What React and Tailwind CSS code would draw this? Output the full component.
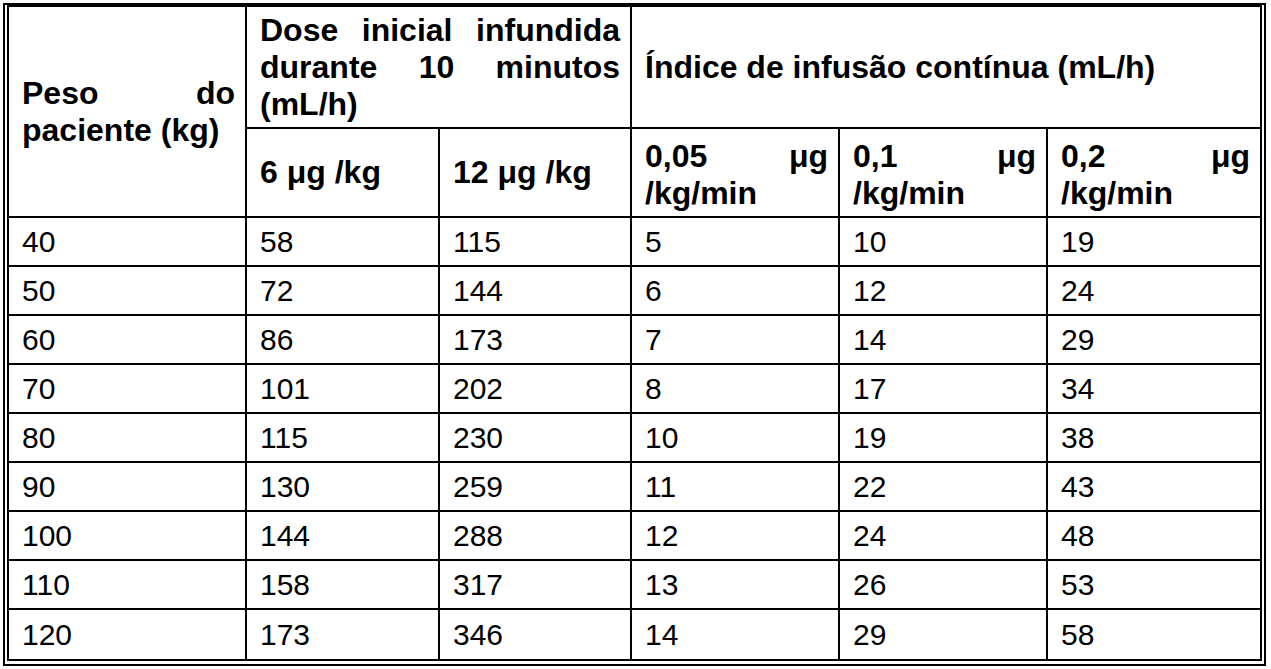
import React from "react";

const rows = [
  ["40", "58", "115", "5", "10", "19"],
  ["50", "72", "144", "6", "12", "24"],
  ["60", "86", "173", "7", "14", "29"],
  ["70", "101", "202", "8", "17", "34"],
  ["80", "115", "230", "10", "19", "38"],
  ["90", "130", "259", "11", "22", "43"],
  ["100", "144", "288", "12", "24", "48"],
  ["110", "158", "317", "13", "26", "53"],
  ["120", "173", "346", "14", "29", "58"],
];

const Cell = ({ className = "", children }) => (
  <div
    className={
      "flex items-center border-r-2 border-b-2 border-black pl-[13px] pr-[10px] " +
      className
    }
  >
    {children}
  </div>
);

const Rate = ({ value }) => (
  <p className="w-full text-justify font-bold text-[32px] leading-[37px] pt-[4px]">
    {value} μg <span className="whitespace-nowrap">/kg/min</span>
  </p>
);

const App = () => {
  return (
    <div className="min-h-screen bg-white pt-[3px] pl-[3px] text-black font-['Liberation_Sans',Arial,sans-serif]">
      <div className="w-fit border-2 border-black px-[2px] pb-[3px]">
        <div className="grid grid-cols-[238px_193px_192px_208px_208px_214px] grid-rows-[122px_89px_repeat(8,49px)_51px] border-l-2 border-t-2 border-black">
          <Cell className="row-span-2">
            <p className="w-full text-justify font-bold text-[32px] leading-[37px]">
              Peso do paciente (kg)
            </p>
          </Cell>
          <Cell className="col-span-2">
            <p className="w-full text-justify font-bold text-[32px] leading-[37px]">
              Dose inicial infundida durante 10 minutos{" "}
              <span className="whitespace-nowrap">(mL/h)</span>
            </p>
          </Cell>
          <Cell className="col-span-3">
            <p className="font-bold text-[32px] leading-[37px]">
              Índice de infusão contínua (mL/h)
            </p>
          </Cell>

          <Cell>
            <p className="font-bold text-[32px] leading-[37px]">6 μg /kg</p>
          </Cell>
          <Cell>
            <p className="font-bold text-[32px] leading-[37px]">12 μg /kg</p>
          </Cell>
          <Cell>
            <Rate value="0,05" />
          </Cell>
          <Cell>
            <Rate value="0,1" />
          </Cell>
          <Cell>
            <Rate value="0,2" />
          </Cell>

          {rows.map((row) =>
            row.map((v, i) => (
              <Cell key={row[0] + "-" + i}>
                <span className="text-[30px] leading-[34px]">{v}</span>
              </Cell>
            ))
          )}
        </div>
      </div>
    </div>
  );
};

export default App;
